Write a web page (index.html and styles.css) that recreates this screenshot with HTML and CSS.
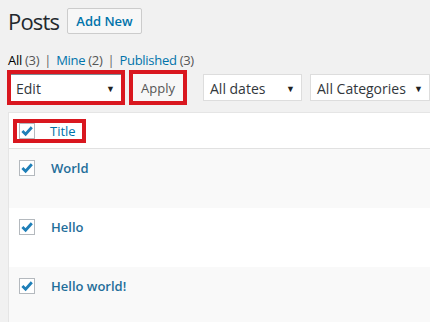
FILE: index.html
```html
<!DOCTYPE html>
<html>
<head>
<meta charset="utf-8">
<link rel="stylesheet" href="styles.css">
</head>
<body>
<div class="wrap">
  <div class="head">
    <h1 class="title">Posts</h1>
    <span class="add-new">Add New</span>
  </div>
  <div class="subsubsub">
    <span class="current">All</span> <span class="count">(3)</span> <span class="sep">|</span>
    <span class="link">Mine</span> <span class="count">(2)</span> <span class="sep">|</span>
    <span class="link">Published</span> <span class="count">(3)</span>
  </div>
  <div class="tablenav">
    <span class="hl hl-edit"><span class="select select-edit"><span>Edit</span><span class="arrow">▼</span></span></span>
    <span class="hl hl-apply"><span class="button">Apply</span></span>
    <span class="select select-dates"><span>All dates</span><span class="arrow">▼</span></span>
    <span class="select select-cats"><span>All Categories</span><span class="arrow">▼</span></span>
  </div>
  <div class="table">
    <div class="thead">
      <span class="hl hl-title">
        <span class="cb"><svg viewBox="0 0 16 16" width="16" height="16"><path d="M3.4 8 L6.6 11.2 L12.8 4.2" fill="none" stroke="#1e7fb8" stroke-width="2.8"/></svg></span>
        <span class="th-title">Title</span>
      </span>
    </div>
    <div class="row alt">
      <span class="cb"><svg viewBox="0 0 16 16" width="16" height="16"><path d="M3.4 8 L6.6 11.2 L12.8 4.2" fill="none" stroke="#1e7fb8" stroke-width="2.8"/></svg></span>
      <span class="post">World</span>
    </div>
    <div class="row">
      <span class="cb"><svg viewBox="0 0 16 16" width="16" height="16"><path d="M3.4 8 L6.6 11.2 L12.8 4.2" fill="none" stroke="#1e7fb8" stroke-width="2.8"/></svg></span>
      <span class="post">Hello</span>
    </div>
    <div class="row alt">
      <span class="cb"><svg viewBox="0 0 16 16" width="16" height="16"><path d="M3.4 8 L6.6 11.2 L12.8 4.2" fill="none" stroke="#1e7fb8" stroke-width="2.8"/></svg></span>
      <span class="post">Hello world!</span>
    </div>
  </div>
</div>
</body>
</html>
```
FILE: styles.css
```css
html, body {
  margin: 0;
  padding: 0;
  background: #f1f1f1;
  font-family: "Open Sans", "Noto Sans", sans-serif;
  color: #444;
  overflow: hidden;
  height: 322px;
}
.wrap {
  padding: 0 0 0 8px;
}
.head {
  display: flex;
  align-items: center;
  height: 42px;
  gap: 8px;
}
.title {
  margin: 0;
  font-size: 22px;
  font-weight: 400;
  color: #23282d;
  line-height: 26px;
  letter-spacing: -0.8px;
}
.add-new {
  display: inline-flex;
  align-items: center;
  height: 24px;
  padding: 0 8px;
  border: 1px solid #ccc;
  border-radius: 2px;
  background: #f7f7f7;
  color: #0073aa;
  font-size: 13px;
  font-weight: 600;
}
.subsubsub {
  margin-top: 9px;
  height: 19px;
  font-size: 13px;
  line-height: 19px;
  color: #555;
  letter-spacing: -0.3px;
}
.subsubsub .current { color: #000; }
.subsubsub .count { color: #555; }
.subsubsub .sep { color: #666; padding: 0 2px; }
.subsubsub .link { color: #0073aa; }
.tablenav {
  display: flex;
  align-items: center;
  height: 35px;
  margin-left: -1px;
}
.hl {
  display: inline-flex;
  border: 4px solid #d9171f;
  box-sizing: border-box;
}
.hl-edit { width: 118px; height: 35px; }
.hl-apply { width: 58px; height: 35px; margin-left: 4px; margin-right: 16px; }
.select {
  display: flex;
  align-items: center;
  justify-content: space-between;
  box-sizing: border-box;
  background: #fff;
  font-size: 14px;
  color: #32373c;
  padding: 1px 6px 0 6px;
}
.select-edit {
  width: 110px;
  height: 27px;
  border-top: 1px solid #7e8993;
  padding-left: 5px;
}
.select-dates {
  width: 99px;
  height: 27px;
  border: 1px solid #ddd;
  margin-right: 8px;
}
.select-cats {
  width: 120px;
  height: 27px;
  border: 1px solid #ddd;
}
.arrow {
  font-size: 9px;
  color: #222;
}
.button {
  display: flex;
  align-items: center;
  justify-content: center;
  width: 50px;
  height: 27px;
  background: #f7f7f7;
  color: #555;
  font-size: 13px;
  padding-top: 1px;
  box-sizing: border-box;
}
.table {
  margin-top: 7px;
  border: 1px solid #e5e5e5;
  border-right: none;
  background: #fff;
}
.thead {
  height: 36px;
  border-bottom: 1px solid #e1e1e1;
  display: flex;
  align-items: flex-start;
  padding-left: 4px;
  padding-top: 6px;
  box-sizing: border-box;
}
.hl-title {
  width: 73px;
  height: 24px;
  align-items: center;
  padding-left: 2px;
  box-sizing: border-box;
}
.cb {
  display: inline-block;
  width: 16px;
  height: 16px;
  box-sizing: border-box;
  border: 1px solid #b4b9be;
  background: #fff;
  flex: none;
}
.cb svg { display: block; margin: -1px 0 0 -1px; }
.th-title {
  margin-left: 15px;
  color: #0073aa;
  font-size: 13px;
  line-height: 16px;
}
.row {
  height: 59px;
  display: flex;
  align-items: flex-start;
  padding-left: 10px;
  padding-top: 11px;
  box-sizing: border-box;
  background: #fff;
}
.row.alt { background: #f9f9f9; }
.post {
  margin-left: 16px;
  font-size: 13px;
  font-weight: 600;
  color: #1f6e9a;
  line-height: 16px;
}
```
